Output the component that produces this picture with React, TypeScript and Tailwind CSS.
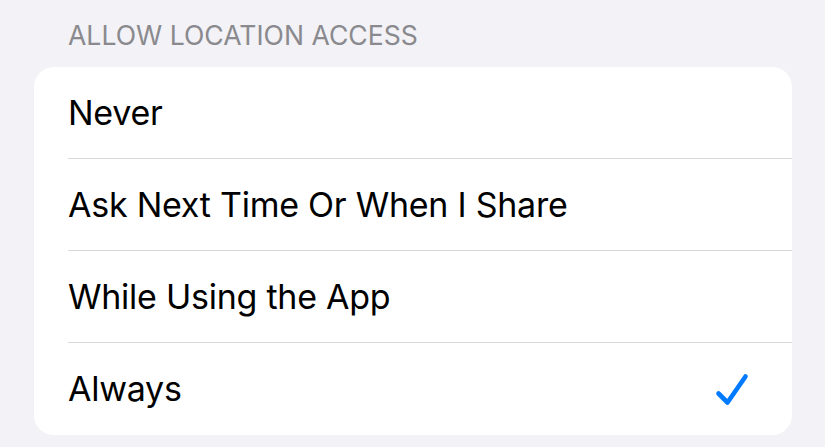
const options = [
  { id: "never", label: "Never" },
  { id: "ask", label: "Ask Next Time Or When I Share" },
  { id: "while", label: "While Using the App" },
  { id: "always", label: "Always" },
];

function Check() {
  return (
    <svg width="34" height="33" viewBox="0 0 34 33" fill="none">
      <path
        d="M3.5 20.5 L12.5 29.5 L30.5 3.5"
        stroke="#007aff"
        strokeWidth="4.6"
        strokeLinecap="round"
        strokeLinejoin="round"
      />
    </svg>
  );
}

export default function App() {
  const selected = "always";
  return (
    <div
      className="h-[447px] w-[825px] overflow-hidden bg-[#f2f2f7]"
      style={{ fontFamily: "Inter, 'Liberation Sans', sans-serif" }}
    >
      <div className="pl-[68px] pt-[20px] h-[67px] text-[26.6px] leading-[30px] text-[#8a8a8e]">
        ALLOW LOCATION ACCESS
      </div>
      <div className="ml-[34px] w-[758px] rounded-[20px] bg-white">
        {options.map((o, i) => (
          <div key={o.id} className="pl-[34px]">
            <div
              className={
                "flex h-[92px] items-center justify-between pr-[43px] " +
                (i < options.length - 1 ? "border-b border-[#d8d8dc]" : "")
              }
            >
              <span className="text-[34px] leading-none tracking-[-0.25px] text-black">
                {o.label}
              </span>
              {selected === o.id ? <Check /> : null}
            </div>
          </div>
        ))}
      </div>
    </div>
  );
}
